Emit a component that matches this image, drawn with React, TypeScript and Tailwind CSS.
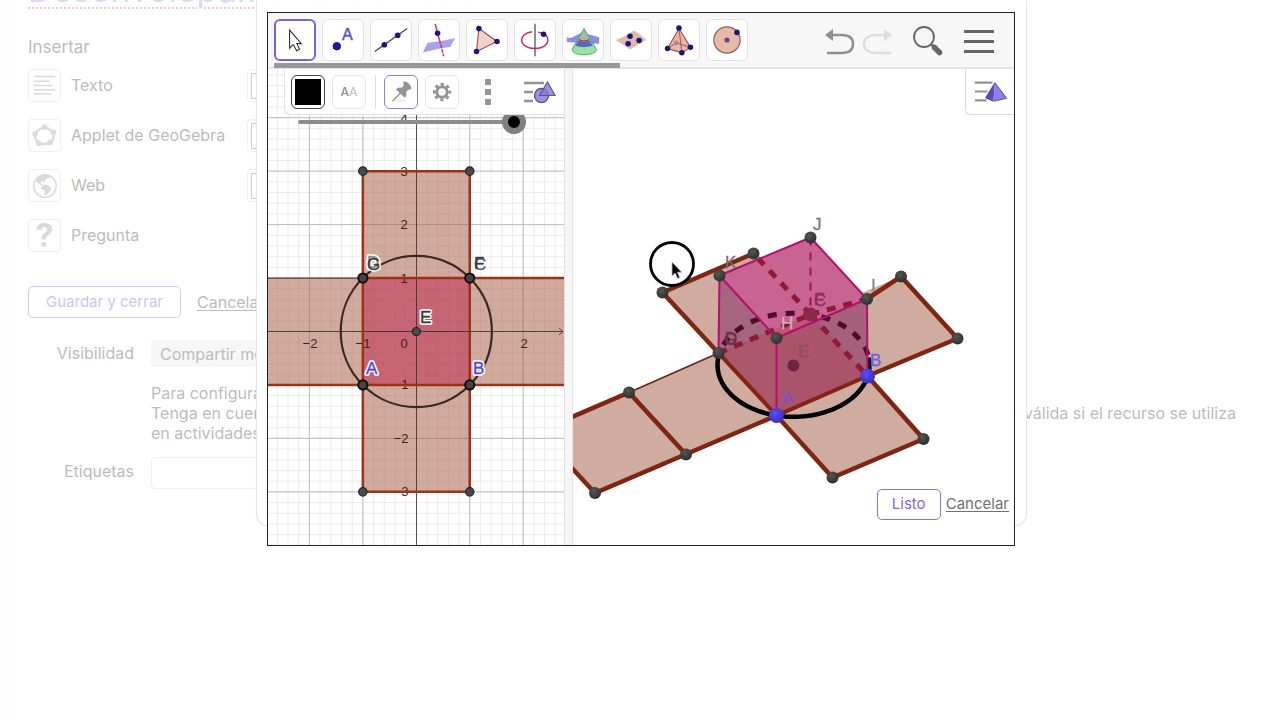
import React from "react";
import clsx from "clsx";
import { BsGlobeAmericas } from "react-icons/bs";

type Point = [number, number];

const NAVY = "#1b1580";

/* ---------- toolbar icons ---------- */

const MoveIcon = () => (
  <svg viewBox="0 0 42 42" className="size-full">
    <path d="M15 10v20l4-4 4 7 3-2-3-6h5z" fill="#fff" stroke="#333" strokeWidth="1.2" />
  </svg>
);

const PointIcon = () => (
  <svg viewBox="0 0 42 42" className="size-full">
    <circle cx="14.500" cy="27.500" r="4" fill="#1c14b4" stroke="#111" strokeWidth=".8" />
    <text x="20" y="21" fontSize="17" fill="#5a4fc4" stroke="#5a4fc4" strokeWidth=".4" fontFamily="Liberation Sans, sans-serif">A</text>
  </svg>
);

const LineIcon = () => (
  <svg viewBox="0 0 42 42" className="size-full">
    <path d="M4 33 38 9" stroke="#444" strokeWidth="1.400" />
    <circle cx="14" cy="26" r="3" fill={NAVY} />
    <circle cx="28" cy="16" r="3" fill={NAVY} />
  </svg>
);

const PerpendicularIcon = () => (
  <svg viewBox="0 0 42 42" className="size-full">
    <path d="M9 24q14-1 29-5l-5 9q-14 2-29 6z" fill="#a9a1ee" />
    <path d="M17 4l4.500 17" stroke="#e0245a" strokeWidth="1.500" />
    <path d="M21.500 21l4.500 17" stroke="#c03a70" strokeWidth="1.600" strokeDasharray="4 1" />
    <circle cx="19.500" cy="14" r="2.900" fill={NAVY} />
  </svg>
);

const PolygonIcon = () => (
  <svg viewBox="0 0 42 42" className="size-full">
    <path d="M12.500 9 31.500 22.500 10 33z" fill="#ecd3cb" stroke="#b04a3a" strokeWidth="1.200" />
    <circle cx="12.500" cy="9" r="2.900" fill={NAVY} />
    <circle cx="31.500" cy="22.500" r="2.900" fill={NAVY} />
    <circle cx="10" cy="33" r="2.900" fill={NAVY} />
  </svg>
);

const AxisCircleIcon = () => (
  <svg viewBox="0 0 42 42" className="size-full">
    <path d="M21 4v34" stroke="#888" strokeWidth="2" />
    <path d="M18 12.300C11 13 7 17 7 21c0 5 6 9 14 9s13.500-4 13.500-9c0-3.500-3-7-10-8.200" fill="none" stroke="#d0265a" strokeWidth="1.500" />
    <circle cx="30" cy="15" r="2.900" fill={NAVY} />
  </svg>
);

const ConeIcon = () => (
  <svg viewBox="0 0 42 42" className="size-full">
    <path d="M4 18q4 2 8-1l8-4 18 5v7q-6-1-11 1t-12-2l-11-1z" fill="#8f8ce6" />
    <path d="M22 9 9.500 31c0 3.500 6 5.500 12.500 5.500S35 34.500 35 31z" fill="#8adb94" opacity=".85" />
    <path d="M22 9l-5.500 12q5.500 2 11 0z" fill="#a8b8a8" />
    <path d="M16 21.500 13 27q9 3 18 0l-3-5.500q-6 2-12 0z" fill="#5e65c0" />
    <path d="M16.500 20.500q5.500 3 11 0" fill="none" stroke="#c02a50" strokeWidth="1.200" />
    <path d="M22 9 9.500 31c0 3.500 6 5.500 12.500 5.500S35 34.500 35 31z" fill="none" stroke="#4aa858" strokeWidth="1" />
  </svg>
);

const PlaneIcon = () => (
  <svg viewBox="0 0 42 42" className="size-full">
    <path d="M5 21q9-3 19-10 7 4 13 10-8 4-17 10-7-5-15-10z" fill="#e0b9ad" />
    <circle cx="20" cy="17" r="2.900" fill={NAVY} />
    <circle cx="29.500" cy="21.500" r="2.900" fill={NAVY} />
    <circle cx="18" cy="25" r="2.900" fill={NAVY} />
  </svg>
);

const PyramidIcon = () => (
  <svg viewBox="0 0 42 42" className="size-full">
    <path d="M21 9 9 30 24 34.500 33 28.500z" fill="#e3b8ab" stroke="#a8503f" strokeWidth="1.200" />
    <path d="M21 9l3 25.500M9 30l9-6 15 4.500" fill="none" stroke="#a8503f" strokeWidth="1" />
    <circle cx="18" cy="24" r="2.500" fill="#a98a9c" />
    <circle cx="21" cy="8.500" r="2.900" fill={NAVY} />
    <circle cx="9" cy="30" r="2.900" fill={NAVY} />
    <circle cx="24" cy="34.500" r="2.900" fill={NAVY} />
    <circle cx="33" cy="28.500" r="2.900" fill={NAVY} />
  </svg>
);

const SphereIcon = () => (
  <svg viewBox="0 0 42 42" className="size-full">
    <circle cx="21" cy="21" r="13.800" fill="#e6b9ac" stroke="#96604f" strokeWidth="1.300" />
    <circle cx="21" cy="21" r="2.700" fill="#6b4a78" />
    <circle cx="31.500" cy="13" r="2.900" fill={NAVY} />
  </svg>
);

const tools = [
  { name: "Elige y Mueve", icon: <MoveIcon /> },
  { name: "Punto", icon: <PointIcon /> },
  { name: "Recta", icon: <LineIcon /> },
  { name: "Perpendicular", icon: <PerpendicularIcon /> },
  { name: "Polígono", icon: <PolygonIcon /> },
  { name: "Circunferencia", icon: <AxisCircleIcon /> },
  { name: "Intersección", icon: <ConeIcon /> },
  { name: "Plano", icon: <PlaneIcon /> },
  { name: "Pirámide", icon: <PyramidIcon /> },
  { name: "Esfera", icon: <SphereIcon /> },
];

const Toolbar = () => (
  <div className="flex h-14 items-start justify-between border-b-2 border-[#e4e4e4] bg-[#f7f7f7]">
    <div className="ml-1.5 flex h-[55px] flex-col justify-between pt-1.5">
      <div className="flex gap-1.5">
        {tools.map((tool, i) => (
          <button
            key={tool.name}
            aria-label={tool.name}
            className={clsx(
              "size-[42px] rounded-md bg-white",
              i === 0 ? "border-2 border-[#7466cc]" : "border border-[#e2e2e2]"
            )}
          >
            {tool.icon}
          </button>
        ))}
      </div>
      <div className="h-[5px] w-[346px] bg-[#989898]" />
    </div>
    <div className="mr-5 flex h-14 items-center">
      <button aria-label="Deshacer" className="size-10">
        <svg viewBox="0 0 40 40" className="size-full">
          <path d="M10 14h12c8 0 11 4 11 9s-3 9-11 9H7" fill="none" stroke="#8f8f8f" strokeWidth="2.400" />
          <path d="M5 14l8-6v12z" fill="#8f8f8f" />
        </svg>
      </button>
      <button aria-label="Rehacer" className="size-10">
        <svg viewBox="0 0 40 40" className="size-full">
          <path d="M29 14H16C8 14 4 18 4 23s4 9 12 9h15" fill="none" stroke="#dedede" strokeWidth="2.400" />
          <path d="M32 14l-8-6v12z" fill="#dedede" />
        </svg>
      </button>
      <button aria-label="Buscar" className="ml-2 size-10">
        <svg viewBox="0 0 40 40" className="size-full">
          <circle cx="16" cy="16" r="10" fill="none" stroke="#666" strokeWidth="1.800" />
          <path d="M23 23l4 4" stroke="#666" strokeWidth="2.500" />
          <path d="M26.500 26.500l5 5" stroke="#666" strokeWidth="5.500" strokeLinecap="round" />
        </svg>
      </button>
      <button aria-label="Menú" className="ml-4 flex h-10 w-[30px] flex-col justify-center gap-[7px]">
        <span className="h-[3px] w-full bg-[#666]" />
        <span className="h-[3px] w-full bg-[#666]" />
        <span className="h-[3px] w-full bg-[#666]" />
      </button>
    </div>
  </div>
);

/* ---------- 2D view ---------- */

const OX = 416.3;
const OY = 331.5;
const UNIT = 53.45;
const gx = (x: number) => OX + x * UNIT;
const gy = (y: number) => OY - y * UNIT;

const minorX = Array.from({ length: 29 }, (_, i) => gx((i - 14) / 5));
const minorY = Array.from({ length: 46 }, (_, i) => gy((i - 20) / 5));

const netPoints2D: Point[] = [[-1, 3], [1, 3], [-1, -3], [1, -3]];
const corners2D: Point[] = [[-1, 1], [1, 1], [-1, -1], [1, -1]];

// C and F, and D and G, share a corner, so their labels overlap
const labels2D = [
  { t: "D", x: 367, y: 268, c: "#8a8a8a" },
  { t: "G", x: 367, y: 270, c: "#3c3c3c" },
  { t: "C", x: 474, y: 270, c: "#5a5a8a" },
  { t: "F", x: 474, y: 269, c: "#3c3c3c" },
  { t: "E", x: 420, y: 323, c: "#3c3c3c" },
  { t: "A", x: 366, y: 374, c: "#5545e0" },
  { t: "B", x: 473, y: 374, c: "#5545e0" },
];

const axisLabels = [
  { t: "4", x: 404, y: 123 },
  { t: "3", x: 404, y: 176 },
  { t: "2", x: 404, y: 229 },
  { t: "1", x: 404, y: 283 },
  { t: "0", x: 404, y: 348 },
  { t: "−1", x: 401, y: 389 },
  { t: "−2", x: 401, y: 443 },
  { t: "−3", x: 401, y: 496 },
  { t: "−2", x: 310, y: 348 },
  { t: "−1", x: 363, y: 348 },
  { t: "2", x: 524, y: 348 },
];

const Plane2D = () => (
  <svg viewBox="268 69 296 476" className="block h-[476px] w-[296px]" fontFamily="Liberation Sans, Arial, sans-serif">
    <g stroke="#ececec">
      {minorX.map((x) => <path key={x} d={`M${x} 69V545`} />)}
      {minorY.map((y) => <path key={y} d={`M268 ${y}H564`} />)}
    </g>
    <g stroke="#bdbdbd">
      {[-2, -1, 1, 2].map((n) => <path key={n} d={`M${gx(n)} 69V545`} />)}
      {[-3, -2, -1, 1, 2, 3, 4].map((n) => <path key={n} d={`M268 ${gy(n)}H564`} />)}
    </g>
    <g fill="#a1553a" fillOpacity=".5">
      <rect x={gx(-1)} y={gy(3)} width={2 * UNIT} height={2 * UNIT} />
      <rect x={gx(-1)} y={gy(-1)} width={2 * UNIT} height={2 * UNIT} />
      <rect x="268" y={gy(1)} width={gx(-1) - 268} height={2 * UNIT} />
      <rect x={gx(1)} y={gy(1)} width={564 - gx(1)} height={2 * UNIT} />
    </g>
    <rect x={gx(-1)} y={gy(1)} width={2 * UNIT} height={2 * UNIT} fill="#ab1c30" fillOpacity=".68" />
    <path d="M416.500 69V545M268 331.500H563M559 328l4 3.500-4 3.500" fill="none" stroke="#3c3030" strokeOpacity=".85" />
    <g fontSize="13" fill="#3c2420" textAnchor="middle">
      {axisLabels.map((l, i) => <text key={i} x={l.x} y={l.y}>{l.t}</text>)}
    </g>
    <circle cx={OX} cy={OY} r={UNIT * Math.SQRT2} fill="none" stroke="#3a2824" strokeWidth="2.200" />
    <path d={`M268 ${gy(1)}H${gx(-1)}`} stroke="#7a3326" strokeWidth="1.300" />
    <g fill="none" stroke="#9c3219" strokeWidth="2.500">
      <path d={`M${gx(-1)} ${gy(3)}H${gx(1)}V${gy(-3)}H${gx(-1)}Z`} />
      <path d={`M268 ${gy(-1)}H564M${gx(-1)} ${gy(1)}H564`} />
    </g>
    {netPoints2D.map(([x, y]) => (
      <circle key={`${x},${y}`} cx={gx(x)} cy={gy(y)} r="4.200" fill="#4a4a4a" stroke="#222" strokeWidth="1.200" />
    ))}
    {corners2D.map(([x, y]) => (
      <circle key={`${x},${y}`} cx={gx(x)} cy={gy(y)} r="4.600" fill="#444" stroke="#111" strokeWidth="2" />
    ))}
    <circle cx={OX} cy={OY} r="4" fill="#4a4a4a" stroke="#222" strokeWidth="1.200" />
    <g fontSize="17" stroke="#fff" strokeWidth="3.500" strokeLinejoin="round">
      {labels2D.map((l) => <text key={l.t} x={l.x} y={l.y}>{l.t}</text>)}
    </g>
    <g fontSize="17" strokeWidth=".4">
      {labels2D.map((l) => <text key={l.t} x={l.x} y={l.y} fill={l.c} stroke={l.c}>{l.t}</text>)}
    </g>
  </svg>
);

const StyleBar = () => (
  <div className="absolute top-0 right-0 flex h-[46px] w-[280px] items-center rounded-bl-md border-b border-l border-[#e2e2e2] bg-white pl-1.5">
    <button aria-label="Color" className="size-[34px] rounded-md border border-[#444] p-[3px]">
      <span className="block size-full bg-black" />
    </button>
    <button className="ml-[7px] size-[34px] rounded-md border border-[#e6e6e6] font-[Inter,sans-serif] text-xs font-medium text-[#8c8c8c]">
      A<span className="text-[#c6c6c6]">A</span>
    </button>
    <span className="ml-[9px] h-[34px] w-px bg-[#dcdcdc]" />
    <button aria-label="Fijar" className="ml-2 size-[34px] rounded-md border border-[#8a80d8]">
      <svg viewBox="0 0 34 34" className="size-full">
        <ellipse cx="16" cy="26" rx="7" ry="1.500" fill="#eee" />
        <path d="M17 17.500 8 26.500" stroke="#949494" strokeWidth="1.600" />
        <path d="M19.500 6q2.500-1 5.500 1.700t3 5.800q-1.500 1.500-3.300 1l-2.200 2.500q1 3.700-1.500 6l-9.500-9q2.700-2.600 6-1.500l2.500-2.500q-.900-2-.5-4z" fill="#949494" />
      </svg>
    </button>
    <button aria-label="Configuración" className="ml-[7px] size-[34px] rounded-md border border-[#e6e6e6]">
      <svg viewBox="0 0 34 34" className="size-full">
        <circle cx="17" cy="17" r="5.500" fill="none" stroke="#949494" strokeWidth="3.200" />
        <circle cx="17" cy="17" r="8.200" fill="none" stroke="#949494" strokeWidth="3" strokeDasharray="3.400 3.040" strokeDashoffset="1.700" />
      </svg>
    </button>
    <button aria-label="Más" className="ml-[26px] flex h-[34px] w-1.5 flex-col justify-center gap-1">
      <span className="size-1.5 bg-[#949494]" />
      <span className="size-1.5 bg-[#949494]" />
      <span className="size-1.5 bg-[#949494]" />
    </button>
    <button aria-label="Barra de estilo" className="ml-[31px] h-[34px] w-9">
      <svg viewBox="0 0 36 34" className="size-full">
        <path d="M2 8h20M2 17h9M2 26h9" stroke="#939393" strokeWidth="2.400" />
        <circle cx="19.500" cy="20.500" r="7" fill="#9a90e8" stroke="#5c5878" strokeWidth="1.400" />
        <path d="M25.500 7 33 20.500H17.500z" fill="#8379dc" fillOpacity=".8" stroke="#5c5878" strokeWidth="1.200" />
      </svg>
    </button>
  </div>
);

/* ---------- 3D view ---------- */

const A: Point = [776.5, 415.5];
const B: Point = [867.5, 376];
const F: Point = [810.5, 314.5];
const G: Point = [718.5, 353];
const H: Point = [776.5, 338];
const I: Point = [867, 299];
const J: Point = [810.5, 237.5];
const K: Point = [719.5, 275.5];
const E: Point = [793.5, 365.5];

const R1: Point = [901, 276.5];
const R2: Point = [957.5, 338.5];
const T1: Point = [753.5, 253.5];
const T2: Point = [662.5, 292.5];
const D1: Point = [832.5, 477.5];
const D2: Point = [923.5, 439];
const L1: Point = [629, 392.5];
const L2: Point = [686, 454.5];
const L3: Point = [538, 431.5];
const L4: Point = [595, 493];

const pts = (...p: Point[]) => p.map((q) => q.join(",")).join(" ");

// arc of the base circle, seen in the cube's projection
const arc = (from: number, to: number) => {
  const out: Point[] = [];
  for (let a = from; a <= to; a += 3) {
    const c = Math.SQRT2 * Math.cos((a * Math.PI) / 180);
    const s = Math.SQRT2 * Math.sin((a * Math.PI) / 180);
    out.push([793.5 + 45.5 * c - 28.6 * s, 365 - 19.5 * c - 31 * s]);
  }
  return pts(...out);
};

const labels3D = [
  { t: "J", x: 813, y: 230, c: "#777" },
  { t: "K", x: 725, y: 268, c: "#7d6a6a" },
  { t: "I", x: 871, y: 291, c: "#8c8080" },
  { t: "H", x: 781, y: 329, c: "#c9b3bb" },
  { t: "E", x: 798, y: 357, c: "#8c4f5e" },
  { t: "C", x: 814, y: 306, c: "#8a2f58" },
  { t: "F", x: 814, y: 305, c: "#8a2f58" },
  { t: "D", x: 725, y: 344, c: "#6b3050" },
  { t: "G", x: 724, y: 345, c: "#6b3050" },
  { t: "A", x: 782, y: 404, c: "#7a55d8" },
  { t: "B", x: 870, y: 366, c: "#6f60e8" },
];

const Scene3D = () => (
  <svg viewBox="573 69 441 476" className="block h-[476px] w-full" preserveAspectRatio="xMinYMin meet" fontFamily="Liberation Sans, Arial, sans-serif">
    <defs>
      <radialGradient id="ball" cx=".4" cy=".35" r=".7">
        <stop offset="0" stopColor="#545654" />
        <stop offset="1" stopColor="#2c2e2c" />
      </radialGradient>
      <radialGradient id="blueBall" cx=".4" cy=".35" r=".7">
        <stop offset="0" stopColor="#5a4ff0" />
        <stop offset="1" stopColor="#3a2cc0" />
      </radialGradient>
    </defs>
    <g fill="#cfaba0">
      <polygon points={pts(F, R1, R2, B)} />
      <polygon points={pts(F, T1, T2, G)} />
      <polygon points={pts(A, D1, D2, B)} />
      <polygon points={pts(G, L3, L4, A)} />
    </g>
    <g stroke="#7e2612" strokeWidth="4.500" strokeLinecap="round" fill="none">
      <polyline points={pts(I, R1, R2, B, D2, D1, A)} />
      <polyline points={pts(T1, T2, G)} />
      <polyline points={pts(A, L4, L3, L1, L2)} />
    </g>
    <polygon points={pts(G, A, H, K)} fill="#a5657e" />
    <polygon points={pts(A, B, I, H)} fill="#a5607c" />
    <polygon points={pts(K, J, I, H)} fill="#c86490" />
    <polygon points={pts(A, B, F, G)} fill="#b83845" fillOpacity=".32" />
    <polyline points={pts(G, A, B)} stroke="#84230f" strokeWidth="4" fill="none" />
    <polyline points={pts(L1, G)} stroke="#6b2a1c" strokeWidth="1.800" />

    <g stroke="#8f1a34" strokeWidth="5" strokeDasharray="9 8" fill="none">
      <polyline points={pts(F, T1)} />
      <polyline points={pts(F, I)} />
      <polyline points={pts(G, F)} />
      <polyline points={pts(F, B)} />
    </g>
    <polyline points={arc(339, 492)} fill="none" stroke="#4f0a2c" strokeWidth="5" strokeDasharray="9 9" />
    <polyline points={arc(135, 336)} fill="none" stroke="#000" strokeWidth="4.500" />
    <polyline points={pts(J, F)} stroke="#a0105a" strokeWidth="2" strokeDasharray="8 7" />
    <g stroke="#b0116c" strokeWidth="2" fill="none" strokeLinejoin="round">
      <polygon points={pts(K, J, I, H)} />
      <polyline points={pts(K, G)} />
      <polyline points={pts(H, A)} />
      <polyline points={pts(I, B)} />
    </g>

    <circle cx={F[0]} cy={F[1]} r="7" fill="#8c2850" />
    <circle cx={E[0]} cy={E[1]} r="6" fill="#6e2340" />
    {[T1, T2, R1, R2, D1, D2, L1, L2, L4, G, H, I, J, K].map(([x, y]) => (
      <circle key={`${x},${y}`} cx={x} cy={y} r="6" fill="url(#ball)" />
    ))}
    {[A, B].map(([x, y]) => (
      <circle key={x} cx={x} cy={y} r="7.500" fill="url(#blueBall)" />
    ))}
    <g fontSize="17">
      {labels3D.map((l) => (
        <text key={l.t} x={l.x} y={l.y} fill={l.c} stroke={l.c} strokeWidth=".3">{l.t}</text>
      ))}
    </g>

    <circle cx="672" cy="264" r="21.500" fill="none" stroke="#000" strokeWidth="2.800" />
    <path d="M672 262v14l3.200-3 2.300 5.500 2.200-1-2.300-5.300h4.300z" fill="#000" stroke="#bbb" strokeWidth=".8" />
  </svg>
);

const Applet = () => (
  <div className="h-[534px] overflow-hidden border border-[#222] bg-white">
    <Toolbar />
    <div className="flex">
      <div className="relative shrink-0">
        <Plane2D />
        <input
          type="range"
          aria-label="Deslizador"
          defaultValue={100}
          className="absolute top-[41px] left-[30px] h-6 w-[228px] appearance-none bg-transparent [&::-webkit-slider-runnable-track]:h-1 [&::-webkit-slider-runnable-track]:rounded-full [&::-webkit-slider-runnable-track]:bg-[#8c8c8c] [&::-webkit-slider-thumb]:-mt-2.5 [&::-webkit-slider-thumb]:size-6 [&::-webkit-slider-thumb]:appearance-none [&::-webkit-slider-thumb]:rounded-full [&::-webkit-slider-thumb]:border-[6px] [&::-webkit-slider-thumb]:border-[#808080] [&::-webkit-slider-thumb]:bg-black"
        />
        <StyleBar />
      </div>
      <div className="w-[9px] shrink-0 border-x border-[#e4e4e4] bg-[#f6f6f6]" />
      <div className="relative min-w-0 grow">
        <Scene3D />
        <button aria-label="Barra de estilo 3D" className="absolute top-0 right-0 h-[46px] w-[49px] rounded-bl-md border-b border-l border-[#dcdcdc] bg-white">
          <svg viewBox="0 0 49 46" className="size-full">
            <path d="M9 14h18M9 23h13M9 32h12" stroke="#939393" strokeWidth="2.200" />
            <path d="M29.500 14 20 29.500l8 3.500z" fill="#5a48c4" />
            <path d="M29.500 14 28 33l13.500-3z" fill="#8d7df0" />
            <path d="M29.500 14 20 29.500l8 3.500 13.500-3z" fill="none" stroke="#3e3a6a" strokeWidth=".8" />
          </svg>
        </button>
        <div className="absolute right-[5px] bottom-[25px] flex items-center gap-[5px] font-[Inter,sans-serif] text-[15px]">
          <button className="h-[31px] w-16 rounded-[5px] border border-[#8276e0] bg-white text-[#7a6fd8]">Listo</button>
          <a href="#" className="text-[#707070] underline underline-offset-2">Cancelar</a>
        </div>
      </div>
    </div>
  </div>
);

/* ---------- page behind the dialog ---------- */

const TextLines = () => (
  <svg viewBox="0 0 33 33" className="size-full">
    <path d="M5 7h23M5 12h17M5 16.500h20M5 21h23M5 25.500h19" stroke="#dadada" strokeWidth="1.500" />
  </svg>
);

const GeoGebraMark = () => (
  <svg viewBox="0 0 33 33" className="size-full" fill="#dadada">
    <ellipse cx="16.500" cy="17" rx="10" ry="8.500" fill="none" stroke="#dadada" strokeWidth="2.500" />
    <circle cx="16.500" cy="7.500" r="3" />
    <circle cx="26" cy="13" r="3" />
    <circle cx="22.500" cy="24" r="3" />
    <circle cx="10.500" cy="25" r="3" />
    <circle cx="6.500" cy="15" r="3" />
  </svg>
);

const inserts = [
  { label: "Texto", icon: <TextLines /> },
  { label: "Applet de GeoGebra", icon: <GeoGebraMark /> },
  { label: "Web", icon: <BsGlobeAmericas className="size-6 text-[#dadada]" /> },
  { label: "Pregunta", icon: <span className="text-[32px] leading-none font-bold text-[#dadada]">?</span> },
];

const Worksheet = () => (
  <main className="min-h-screen border-l-[16px] border-[#fdfdfd] pr-10 pl-3 text-base text-[#bcbcbc]">
    <div className="flex h-3.5 items-end overflow-hidden">
      <h1 className="text-[34px] leading-[48px] whitespace-nowrap text-[#dcd8f8] underline decoration-[#f6c4d6] decoration-dotted decoration-2 underline-offset-5">
        Desenvolepamento do cubo
      </h1>
    </div>
    <h2 className="mt-[21px] text-[17px] leading-6">Insertar</h2>
    <div className="mt-2.5 grid w-[252px] grid-cols-[219px_33px] gap-y-[17px]">
      {inserts.map((item, i) => (
        <React.Fragment key={item.label}>
          <button className="flex items-center gap-2.5 text-left">
            <span className="flex size-[33px] items-center justify-center rounded-sm border border-[#f0f0f0]">{item.icon}</span>
            <span className="pb-0.5">{item.label}</span>
          </button>
          {i < 3 ? (
            <button aria-label="Insertar" className="flex size-[33px] items-center justify-center rounded-sm border border-[#f0f0f0]">
              <span className="size-[26px] border border-[#ccc]" />
            </button>
          ) : (
            <span />
          )}
        </React.Fragment>
      ))}
    </div>
    <div className="mt-[34px] flex items-center gap-4">
      <button className="h-8 w-[153px] rounded-[5px] border border-[#cfcaf4] text-[15px] text-[#cbc6f2]">Guardar y cerrar</button>
      <a href="#" className="underline underline-offset-2">Cancelar</a>
    </div>
    <form className="mt-[22px] grid grid-cols-[106px_1fr] gap-x-[17px]">
      <label htmlFor="visibility" className="text-right leading-[27px]">Visibilidad</label>
      <select id="visibility" className="h-[27px] w-72 appearance-none rounded-sm bg-[#f7f7f7] pl-[9px]">
        <option>Compartir mediante enlace</option>
      </select>
      <div className="col-start-2 mt-4 leading-5">
        <p>Para configurar la visibilidad</p>
        <p className="flex justify-between">
          <span>Tenga en cuenta</span>
          <span className="pr-1">configuración válida si el recurso se utiliza</span>
        </p>
        <p>en actividades</p>
      </div>
      <label htmlFor="tags" className="mt-3.5 text-right leading-[28px]">Etiquetas</label>
      <input id="tags" className="mt-3.5 h-8 w-96 rounded-sm border border-[#f0f0f0]" />
    </form>
  </main>
);

export default function App() {
  return (
    <div className="relative min-h-screen overflow-hidden bg-white font-[Inter,sans-serif]">
      <Worksheet />
      <div role="dialog" aria-label="GeoGebra" className="absolute top-0 left-[20%] h-[526px] w-[771px] rounded-b-xl border border-t-0 border-[#e6e6e6] bg-white/95 pt-3 pr-[11px] pl-2.5 shadow-xs">
        <Applet />
      </div>
    </div>
  );
}
